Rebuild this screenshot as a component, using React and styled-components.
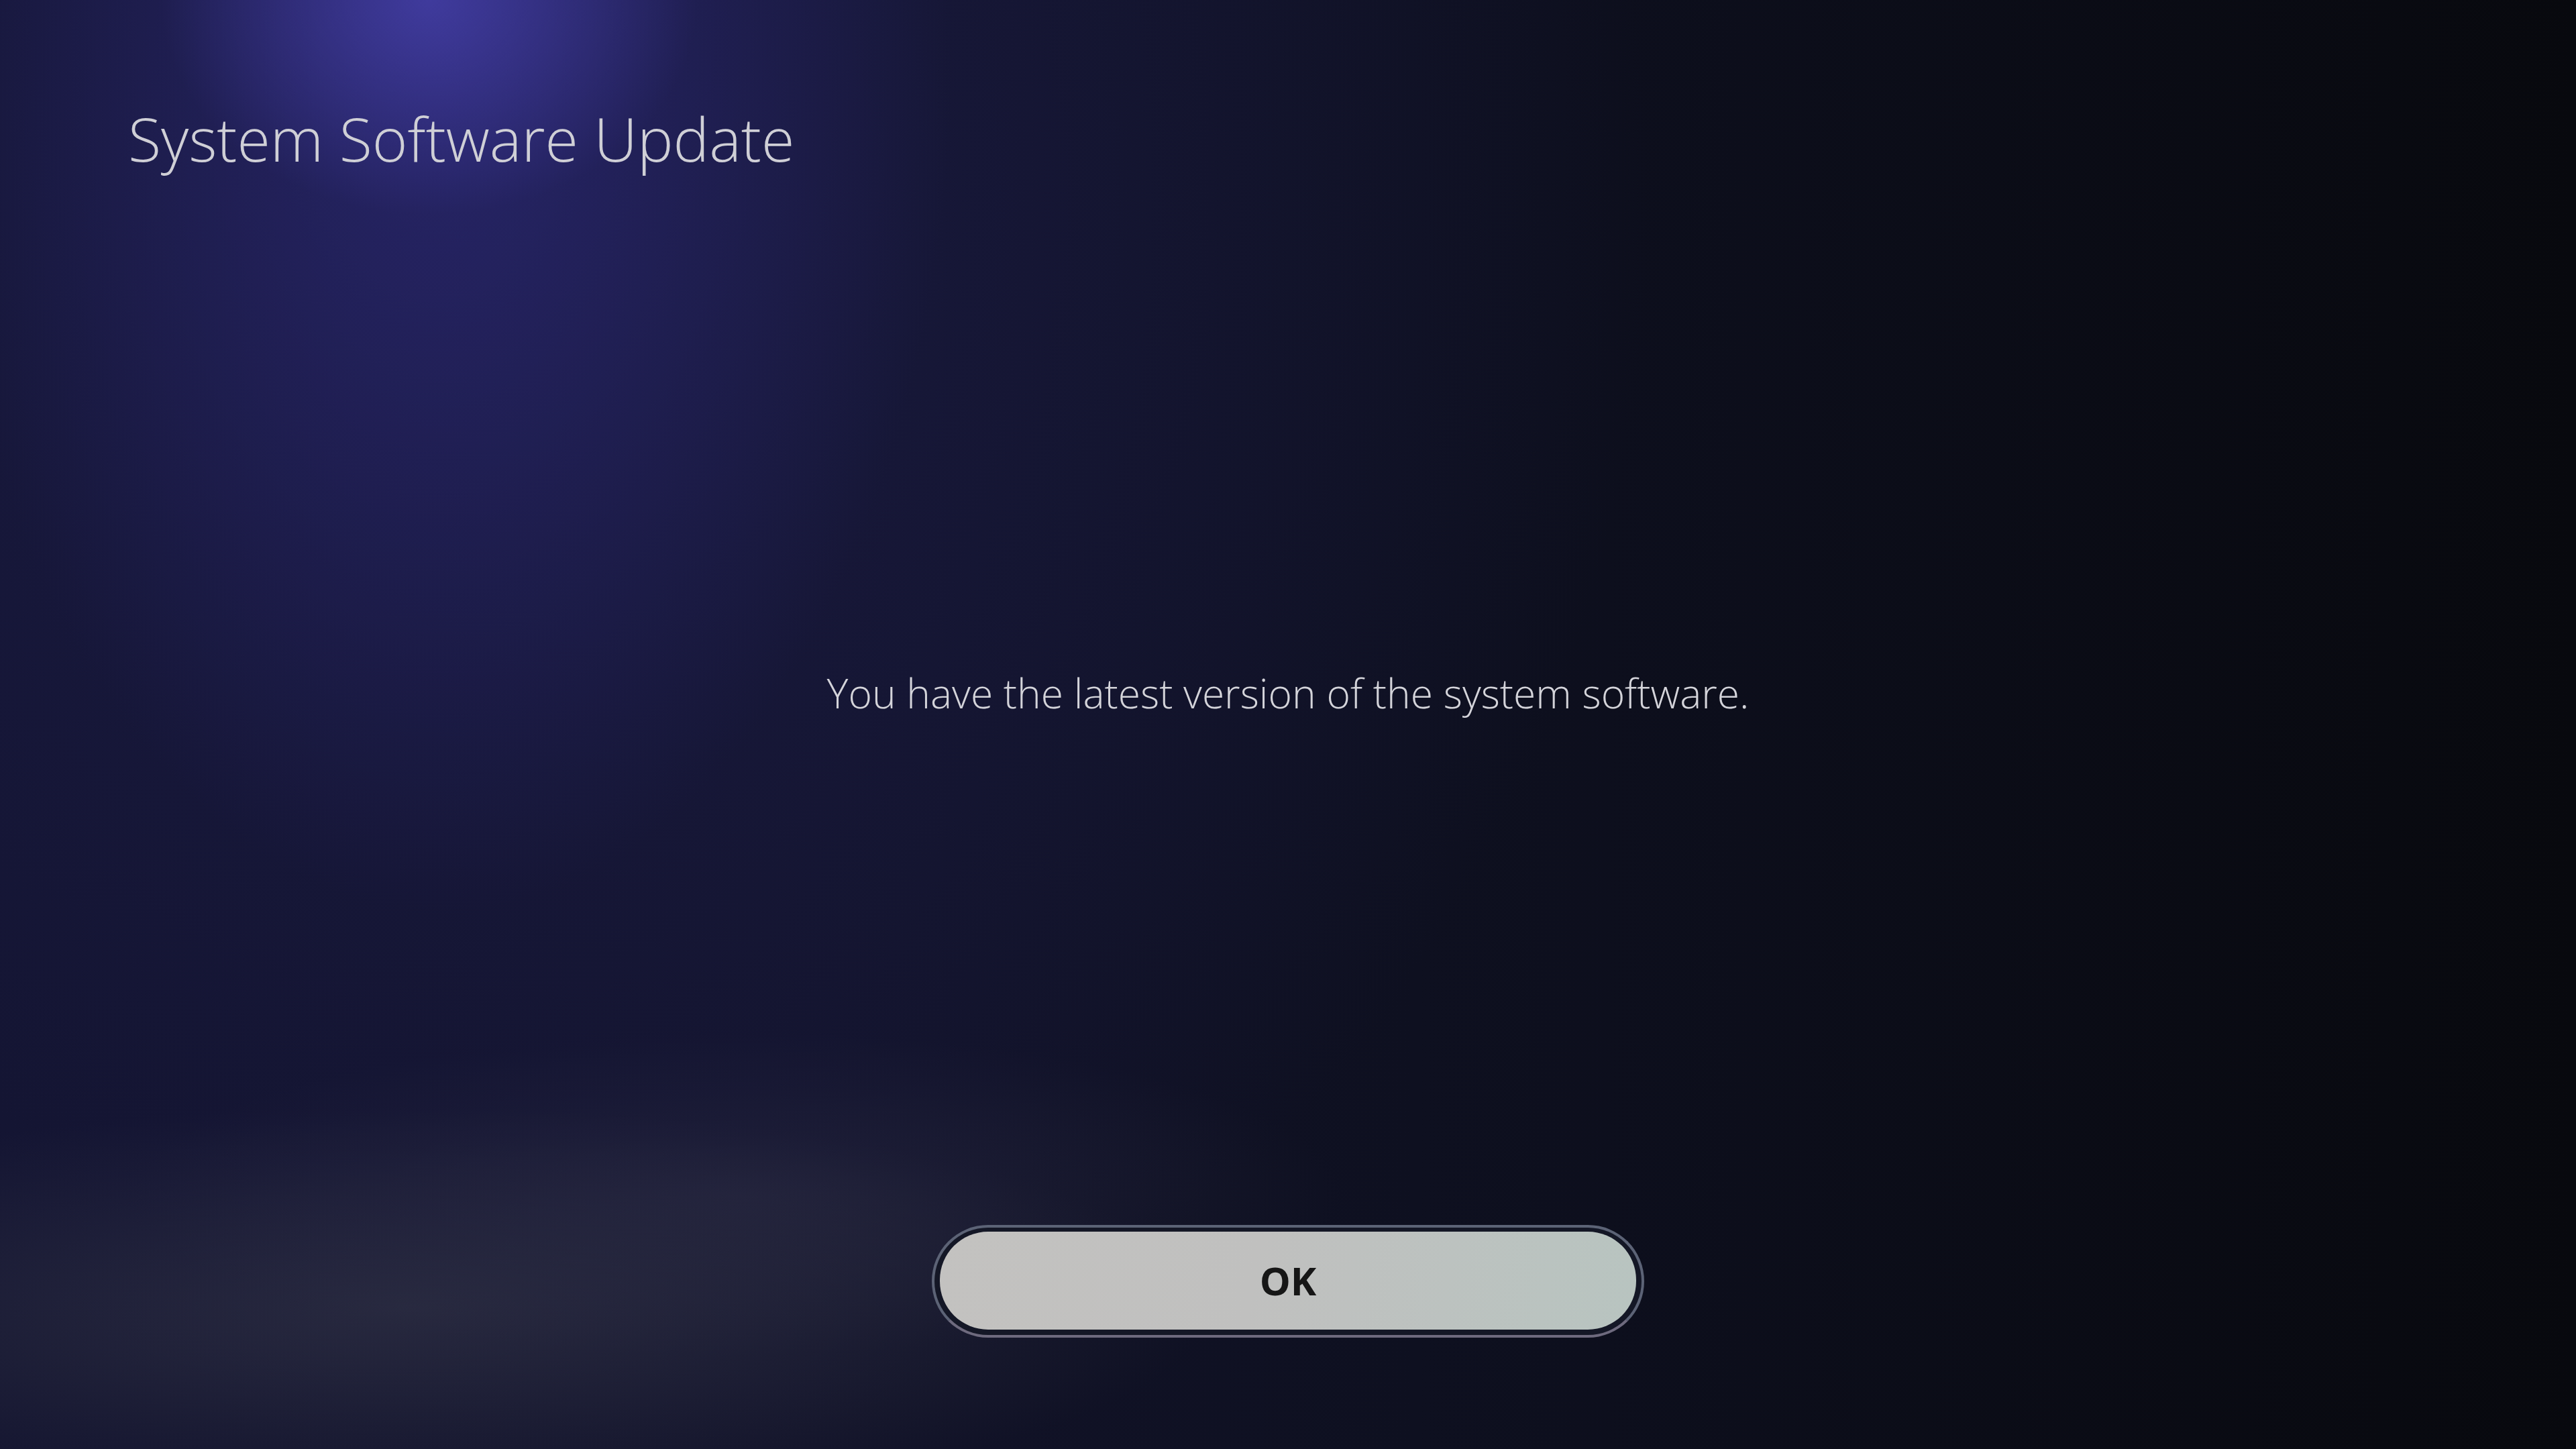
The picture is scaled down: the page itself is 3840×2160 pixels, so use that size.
import React from 'react';
import styled, { createGlobalStyle } from 'styled-components';

//------------------------------------------------------------------------------
// GLOBAL:
//------------------------------------------------------------------------------
const GlobalStyle = createGlobalStyle`
  html, body {
    margin: 0;
    padding: 0;
    background: #0a0b12;
  }
  body {
    font-family: 'Open Sans', 'Noto Sans', 'DejaVu Sans', sans-serif;
    -webkit-font-smoothing: antialiased;
  }
`;

//------------------------------------------------------------------------------
// STYLES:
//------------------------------------------------------------------------------
const Screen = styled.div`
  width: 100vw;
  height: 100vh;
  overflow: hidden;
  display: flex;
  flex-direction: column;
  color: #d6d6dc;
  background:
    radial-gradient(ellipse 400px 320px at 640px 0px, rgba(72, 66, 175, 0.75), rgba(72, 66, 175, 0) 100%),
    radial-gradient(ellipse 760px 1300px at 660px 60px, rgba(48, 44, 130, 0.6), rgba(40, 38, 110, 0) 100%),
    radial-gradient(ellipse 1700px 1900px at 760px 300px, rgba(30, 30, 78, 0.65), rgba(30, 30, 78, 0) 100%),
    radial-gradient(ellipse 1200px 300px at 600px 1950px, rgba(62, 64, 78, 0.5), rgba(62, 64, 78, 0) 100%),
    radial-gradient(ellipse 900px 240px at 1100px 1780px, rgba(52, 52, 72, 0.4), rgba(52, 52, 72, 0) 100%),
    linear-gradient(90deg, #131430 0%, #12132a 30%, #0e1020 55%, #08090e 100%);
`;

const Header = styled.header`
  padding: 161px 0 0 191px;
`;

const Title = styled.h1`
  margin: 0;
  font-size: 90px;
  line-height: 1;
  font-weight: 300;
  color: #cfcfd6;
`;

const Body = styled.main`
  margin-top: 752px;
  display: flex;
  justify-content: center;
`;

const Message = styled.p`
  margin: 0;
  font-size: 60.5px;
  line-height: 1;
  font-weight: 300;
  color: #d4d4da;
`;

const Footer = styled.footer`
  margin-top: 762px;
  display: flex;
  justify-content: center;
`;

const ButtonFrame = styled.div`
  width: 1062px;
  height: 168px;
  box-sizing: border-box;
  border-radius: 84px;
  border: 4px solid #5c6376;
  border-bottom-color: #6e6a7e;
  padding: 6px 8px 8px 8px;
  background: #141726;
  display: flex;
`;

const OkButton = styled.button`
  flex: 1;
  border: none;
  border-radius: 72px;
  background: linear-gradient(100deg, #c3c2c0 0%, #c0c0bf 45%, #b8c4c0 100%);
  color: #161616;
  font-family: 'Open Sans', 'Noto Sans', sans-serif;
  font-size: 58px;
  font-weight: 700;
  cursor: pointer;
  padding: 0;
  :focus {
    outline: none;
  }
`;

//------------------------------------------------------------------------------
// COMPONENT:
//------------------------------------------------------------------------------
const App = () => (
  <>
    <GlobalStyle />
    <Screen>
      <Header>
        <Title>System Software Update</Title>
      </Header>
      <Body>
        <Message>You have the latest version of the system software.</Message>
      </Body>
      <Footer>
        <ButtonFrame>
          <OkButton type="button">OK</OkButton>
        </ButtonFrame>
      </Footer>
    </Screen>
  </>
);

export default App;
